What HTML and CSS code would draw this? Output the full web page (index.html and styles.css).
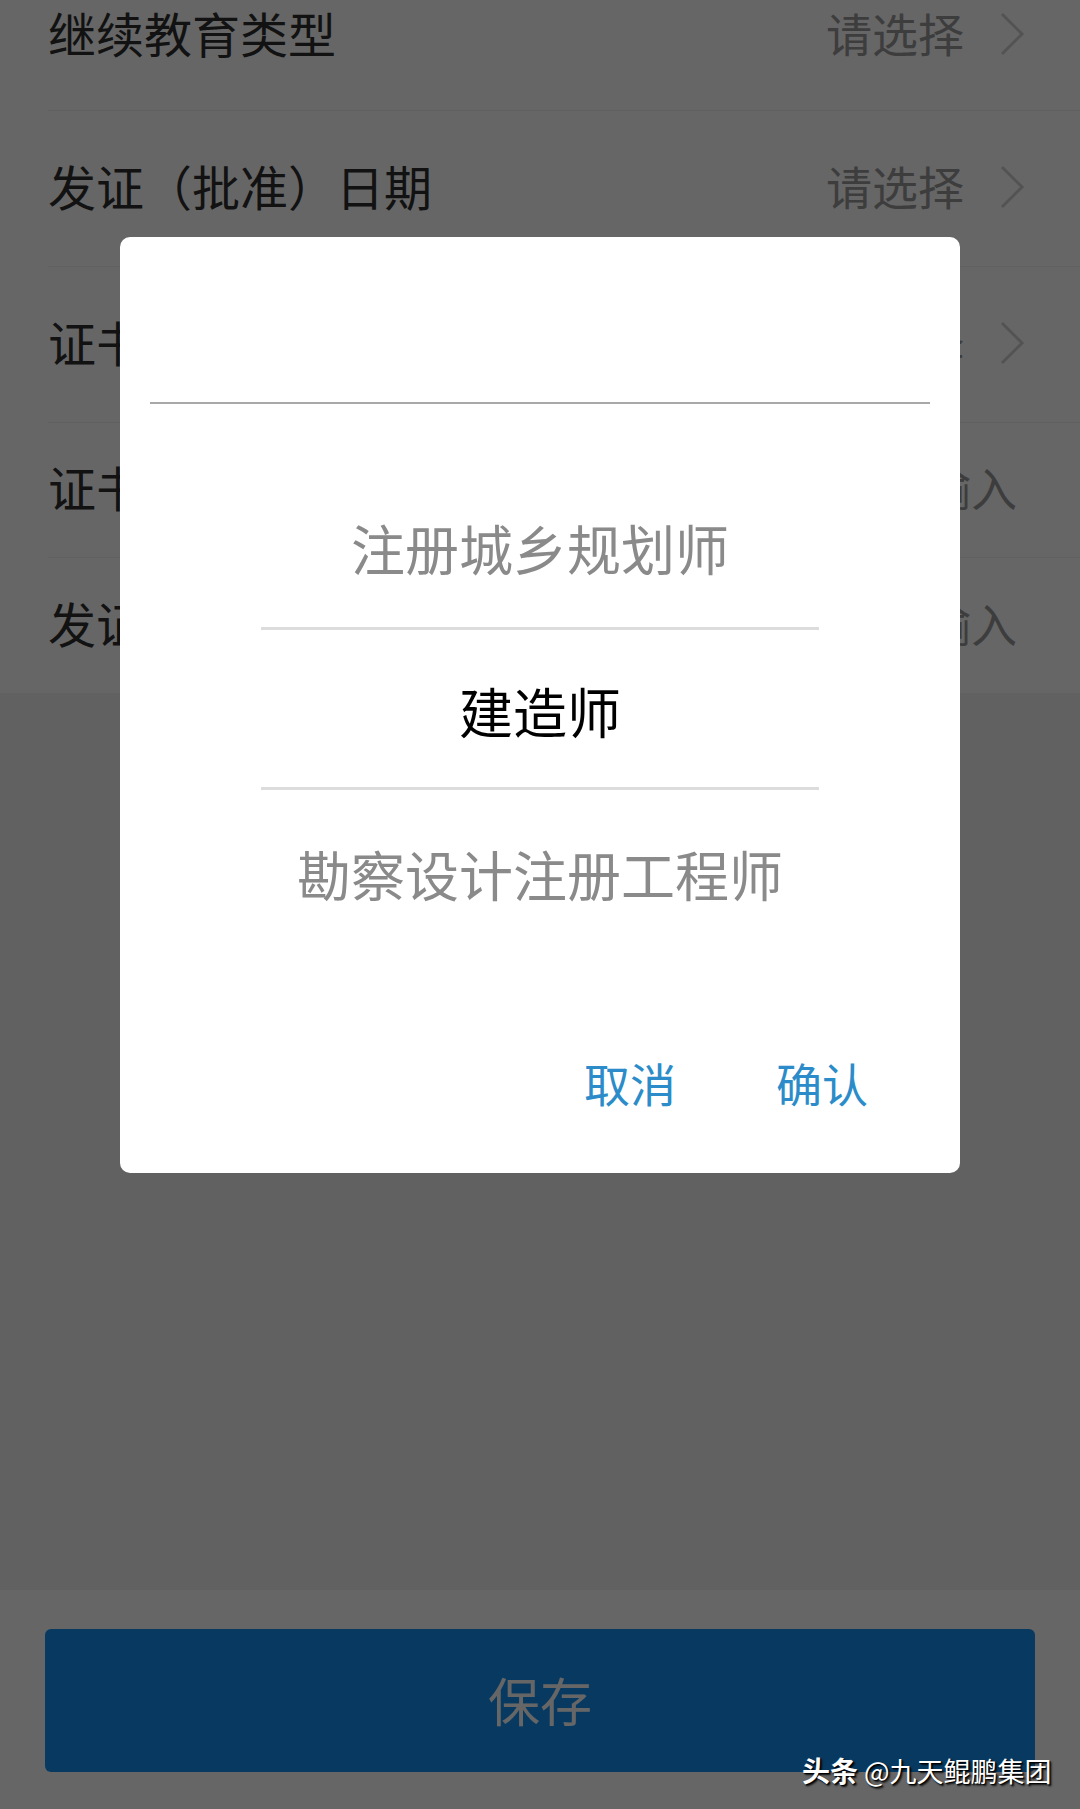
FILE: index.html
```html
<!DOCTYPE html>
<html lang="zh-CN">
<head>
<meta charset="utf-8">
<title>证书信息</title>
<link rel="stylesheet" href="styles.css">
</head>
<body>
<div class="page">
  <div class="list">
    <div class="row row-select row-first">
      <span class="label">继续教育类型</span>
      <span class="value">请选择<svg class="chev" viewBox="0 0 26 44" width="26" height="44"><polyline points="3,2 23,22 3,42" /></svg></span>
    </div>
    <div class="row row-select">
      <span class="label">发证（批准）日期</span>
      <span class="value">请选择<svg class="chev" viewBox="0 0 26 44" width="26" height="44"><polyline points="3,2 23,22 3,42" /></svg></span>
    </div>
    <div class="row row-select">
      <span class="label">证书有效期至</span>
      <span class="value">请选择<svg class="chev" viewBox="0 0 26 44" width="26" height="44"><polyline points="3,2 23,22 3,42" /></svg></span>
    </div>
    <div class="row row-input">
      <span class="label">证书编号</span>
      <span class="value">请输入</span>
    </div>
    <div class="row row-input">
      <span class="label">发证机关</span>
      <span class="value">请输入</span>
    </div>
  </div>
  <div class="spacer"></div>
  <div class="footer">
    <button class="save">保存</button>
  </div>
</div>

<div class="overlay">
  <div class="dialog">
    <div class="dialog-title"></div>
    <div class="dialog-divider"></div>
    <div class="picker">
      <div class="pick">注册城乡规划师</div>
      <div class="pick pick-active">建造师</div>
      <div class="pick">勘察设计注册工程师</div>
    </div>
    <div class="actions">
      <span class="action">取消</span>
      <span class="action">确认</span>
    </div>
  </div>
</div>

<div class="watermark"><b>头条</b> @九天鲲鹏集团</div>
</body>
</html>
```

FILE: styles.css
```css
html, body {
  margin: 0;
  padding: 0;
}
body {
  width: 1080px;
  height: 1809px;
  overflow: hidden;
  position: relative;
  font-family: "Noto Sans CJK SC", "Noto Sans", sans-serif;
  background: #f2f2f2;
}
.page {
  height: 1809px;
  display: flex;
  flex-direction: column;
}
.list {
  background: #ffffff;
}
.row {
  display: flex;
  align-items: center;
  justify-content: space-between;
  margin-left: 48px;
  border-bottom: 1px solid #efefef;
  box-sizing: border-box;
}
.row-select {
  height: 156px;
  padding-right: 55px;
}
.row-first {
  height: 111px;
  padding-bottom: 38px;
}
.row-input {
  height: 135px;
  padding-right: 63px;
}
.row:last-child {
  border-bottom: none;
}
.label {
  font-size: 48px;
  line-height: 1;
  color: #2e2e2e;
  padding-bottom: 8px;
}
.value {
  display: flex;
  align-items: center;
  font-size: 46px;
  line-height: 1;
  color: #999999;
  padding-bottom: 8px;
}
.chev {
  margin-left: 35px;
  margin-top: 4px;
}
.chev polyline {
  fill: none;
  stroke: #d0d0d0;
  stroke-width: 3;
}
.spacer {
  flex: 1;
  background: #f2f2f2;
}
.footer {
  background: #ffffff;
  padding: 39px 45px 37px;
}
.save {
  display: block;
  width: 100%;
  height: 143px;
  border: none;
  border-radius: 6px;
  background: #1592f2;
  color: #ffffff;
  font-family: "Noto Sans CJK SC", "Noto Sans", sans-serif;
  font-size: 52px;
  line-height: 1;
  padding: 0 0 2px;
}
.overlay {
  position: absolute;
  left: 0;
  top: 0;
  width: 1080px;
  height: 1809px;
  background: rgba(0, 0, 0, 0.6);
}
.dialog {
  width: 840px;
  height: 936px;
  margin: 237px auto 0;
  background: #ffffff;
  border-radius: 10px;
  display: flex;
  flex-direction: column;
}
.dialog-title {
  height: 165px;
}
.dialog-divider {
  margin: 0 30px;
  height: 2px;
  background: #a8a8a8;
}
.picker {
  padding-top: 60px;
  display: flex;
  flex-direction: column;
}
.pick {
  height: 163px;
  display: flex;
  align-items: center;
  justify-content: center;
  font-size: 54px;
  line-height: 1;
  color: #8a8a8a;
  padding-top: 4px;
  box-sizing: border-box;
}
.pick-active {
  width: 558px;
  margin: 0 auto;
  color: #000000;
  border-top: 3px solid #dcdcdc;
  border-bottom: 3px solid #dcdcdc;
}
.actions {
  flex: 1;
  display: flex;
  justify-content: flex-end;
  align-items: flex-start;
  gap: 100px;
  padding: 106px 92px 0 0;
}
.action {
  font-size: 46px;
  line-height: 1;
  color: #2b8cc9;
}
.watermark {
  position: absolute;
  left: 802px;
  top: 1752px;
  font-size: 27px;
  line-height: 36px;
  color: #ffffff;
  text-shadow: 1px 1px 1px #000, 2px 2px 2px rgba(0, 0, 0, 0.8);
  white-space: nowrap;
}
.watermark b {
  font-weight: 700;
  font-size: 28px;
}
```
